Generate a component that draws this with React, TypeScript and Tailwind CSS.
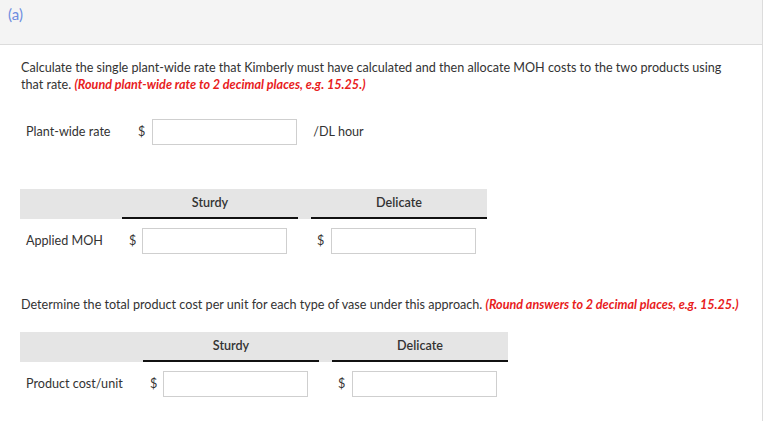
import React from "react";

const font = { fontFamily: "Lato, 'Noto Sans', sans-serif" };

function MoneyInput({ pad, gap }: { pad: string; gap: string }) {
  return (
    <div className={`flex items-center ${pad}`}>
      <span className={`text-[12.6px] text-[#333] ${gap}`}>$</span>
      <input className="h-[26px] w-[145px] border border-[#cfcfcf] bg-white outline-none" />
    </div>
  );
}

function CostTable({ labelW, rowLabel }: { labelW: string; rowLabel: string }) {
  return (
    <div className="w-fit">
      <div className="flex h-[30px] gap-x-[13px] bg-[#e5e5e5]">
        <div className={labelW} />
        {["Sturdy", "Delicate"].map((h) => (
          <div
            key={h}
            className="flex w-[176px] items-center justify-center border-b-2 border-[#111] text-[12.6px] font-semibold text-[#333]"
          >
            {h}
          </div>
        ))}
      </div>
      <div className="mt-[9px] flex items-center gap-x-[13px]">
        <div className={`${labelW} pl-[6px] text-[12.6px] text-[#333]`}>{rowLabel}</div>
        <div className="w-[176px]">
          <MoneyInput pad="pl-[7px]" gap="mr-[6px]" />
        </div>
        <div className="w-[176px]">
          <MoneyInput pad="pl-[6px]" gap="mr-[7px]" />
        </div>
      </div>
    </div>
  );
}

export default function App() {
  return (
    <div style={font} className="h-[421px] w-[765px] bg-white">
      <div className="h-full w-[763px] border-r border-[#dcdcdc]">
        <div className="flex h-[45px] items-start border-b border-[#dcdcdc] bg-[#f4f4f4] pl-[8px] pt-[3px]">
          <span className="text-[15px] text-[#6d8ee0]">(a)</span>
        </div>
        <div className="px-[20px]">
          <p className="pl-[1px] pt-[14px] text-[12.6px] leading-[17px] text-[#333]">
            Calculate the single plant-wide rate that Kimberly must have calculated and then allocate MOH costs to the two products using that rate.{" "}
            <span className="font-bold italic text-[#e8201c]">
              (Round plant-wide rate to 2 decimal places, e.g. 15.25.)
            </span>
          </p>

          <div className="mt-[26px] flex items-center">
            <span className="w-[118px] pl-[6px] text-[12.6px] text-[#333]">Plant-wide rate</span>
            <span className="mr-[7px] text-[12.6px] text-[#333]">$</span>
            <input className="h-[26px] w-[145px] border border-[#cfcfcf] bg-white outline-none" />
            <span className="ml-[16px] text-[12.6px] text-[#333]">/DL hour</span>
          </div>

          <div className="mt-[44px]">
            <CostTable labelW="w-[89px]" rowLabel="Applied MOH" />
          </div>

          <p className="mt-[42px] pl-[1px] text-[12.6px] leading-[17px] text-[#333]">
            Determine the total product cost per unit for each type of vase under this approach.{" "}
            <span className="font-bold italic text-[#e8201c]">
              (Round answers to 2 decimal places, e.g. 15.25.)
            </span>
          </p>

          <div className="mt-[19px]">
            <CostTable labelW="w-[110px]" rowLabel="Product cost/unit" />
          </div>
        </div>
      </div>
    </div>
  );
}
